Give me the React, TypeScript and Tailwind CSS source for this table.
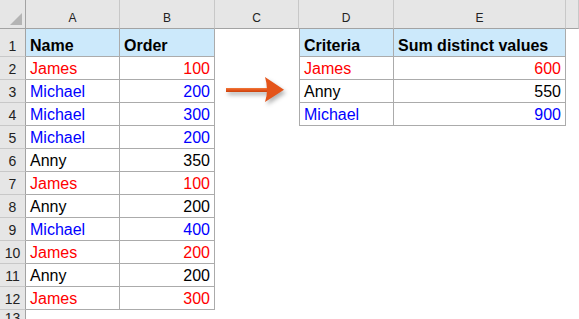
const RED = "text-[#ff0000]";
const BLUE = "text-[#0000ff]";
const BLACK = "text-black";

const orders: [string, number, string][] = [
  ["James", 100, RED],
  ["Michael", 200, BLUE],
  ["Michael", 300, BLUE],
  ["Michael", 200, BLUE],
  ["Anny", 350, BLACK],
  ["James", 100, RED],
  ["Anny", 200, BLACK],
  ["Michael", 400, BLUE],
  ["James", 200, RED],
  ["Anny", 200, BLACK],
  ["James", 300, RED],
];

const totals: [string, number, string][] = [
  ["James", 600, RED],
  ["Anny", 550, BLACK],
  ["Michael", 900, BLUE],
];

const colHead =
  "bg-[#e6e6e6] border-r border-b border-r-[#c8c8c8] border-b-[#a3a3a3] flex items-end justify-center pb-[4px] text-[12px] text-[#222] leading-none";
const rowHead =
  "bg-[#e6e6e6] border-r border-b border-r-[#a3a3a3] border-b-[#c8c8c8] flex items-end justify-center pb-[2px] text-[14px] text-[#222] leading-[16px]";
const cell = "border-r border-b border-[#ababab] flex items-end px-[4px] pb-px text-[16px] leading-[18px] whitespace-nowrap";
const blue = "bg-[#cce9fb] font-bold";

const Arrow = () => (
  <svg width="62" height="28" viewBox="0 0 62 28" className="-mt-[3px] ml-[-3px] drop-shadow-[2px_3px_2px_rgba(0,0,0,0.3)]">
    <defs>
      <linearGradient id="shaft" x1="0" y1="0" x2="0" y2="1">
        <stop offset="0" stopColor="#f07a3c" />
        <stop offset="0.5" stopColor="#e4541a" />
        <stop offset="1" stopColor="#c9430e" />
      </linearGradient>
    </defs>
    <rect x="1" y="12" width="42" height="4" fill="url(#shaft)" />
    <path d="M40 1 L59 13.8 L40 26 Q44 14 40 1 Z" fill="#e4541a" />
  </svg>
);

export default function App() {
  return (
    <div
      className="w-[579px] h-[319px] overflow-hidden bg-white grid grid-cols-[26px_94px_95px_84px_95px_172px_1fr] grid-rows-[29px_28px_repeat(11,23px)_1fr]"
      style={{ fontFamily: '"Liberation Sans", Arial, sans-serif' }}
    >
      {/* column headers */}
      <div className="bg-[#e6e6e6] border-r border-b border-r-[#a3a3a3] border-b-[#a3a3a3] flex items-end justify-end pr-[3px] pb-[3px]">
        <svg width="12" height="12" viewBox="0 0 12 12" className="block">
          <path d="M12 0 L12 12 L0 12 Z" fill="#b4b4b4" />
        </svg>
      </div>
      {["A", "B", "C", "D", "E", ""].map((c, i) => (
        <div key={i} className={colHead}>
          {c}
        </div>
      ))}

      {/* row 1 */}
      <div className={rowHead}>1</div>
      <div className={`${cell} ${blue}`}>Name</div>
      <div className={`${cell} ${blue}`}>Order</div>
      <div />
      <div className={`${cell} ${blue} border-l`}>Criteria</div>
      <div className={`${cell} ${blue}`}>Sum distinct values</div>
      <div />

      {orders.map(([name, val, color], i) => {
        const t = totals[i];
        return [
          <div key={`h${i}`} className={rowHead}>
            {i + 2}
          </div>,
          <div key={`a${i}`} className={`${cell} ${color}`}>
            {name}
          </div>,
          <div key={`b${i}`} className={`${cell} ${color} justify-end`}>
            {val}
          </div>,
          <div key={`c${i}`} className="flex items-center justify-center">
            {i === 1 ? <Arrow /> : null}
          </div>,
          t ? (
            <div key={`d${i}`} className={`${cell} ${t[2]} border-l`}>
              {t[0]}
            </div>
          ) : (
            <div key={`d${i}`} />
          ),
          t ? (
            <div key={`e${i}`} className={`${cell} ${t[2]} justify-end`}>
              {t[1]}
            </div>
          ) : (
            <div key={`e${i}`} />
          ),
          <div key={`f${i}`} />,
        ];
      })}

      <div className={rowHead}>13</div>
    </div>
  );
}
